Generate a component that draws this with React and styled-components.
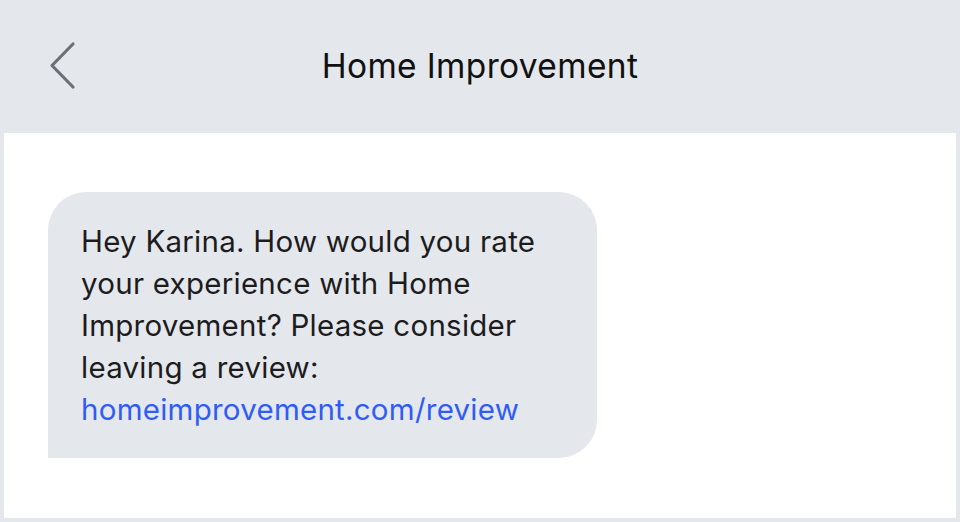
import React from "react";
import styled, { createGlobalStyle } from "styled-components";

const GlobalStyle = createGlobalStyle`
  html, body {
    margin: 0;
    padding: 0;
    background: #e4e7eb;
    font-family: Inter, "Noto Sans", sans-serif;
  }
`;

const Screen = styled.div`
  width: 960px;
  height: 522px;
  background: #e4e7eb;
  display: flex;
  flex-direction: column;
  box-sizing: border-box;
  padding: 0 4px 4px;
`;

const Header = styled.header`
  height: 133px;
  display: grid;
  grid-template-columns: 80px 1fr 80px;
  align-items: center;
  flex-shrink: 0;
`;

const BackButton = styled.button`
  border: none;
  background: none;
  padding: 0;
  margin-left: 43px;
  width: 30px;
  height: 52px;
  cursor: pointer;
  display: flex;
  align-items: center;
  margin-top: -2px;
`;

const Title = styled.h1`
  margin: 0;
  text-align: center;
  font-size: 33.5px;
  font-weight: 400;
  letter-spacing: 0.35px;
  color: #111;
  margin-top: -2px;
`;

const Thread = styled.main`
  flex: 1;
  background: #fff;
  padding: 59px 44px;
`;

const Bubble = styled.div`
  width: 549px;
  box-sizing: border-box;
  background: #e4e7eb;
  border-radius: 38px 38px 38px 0;
  padding: 28px 33px;
  font-size: 29.5px;
  line-height: 42px;
  letter-spacing: 0.25px;
  color: #1c1c1e;
`;

const Link = styled.a`
  color: #2f5cf6;
  text-decoration: none;
`;

export default function App() {
  return (
    <>
      <GlobalStyle />
      <Screen>
        <Header>
          <BackButton aria-label="Back">
            <svg width="30" height="52" viewBox="0 0 30 52" fill="none">
              <path d="M26 4 L5 25.5 L26 47" stroke="#6b7079" strokeWidth="3.2" strokeLinecap="round" strokeLinejoin="round" />
            </svg>
          </BackButton>
          <Title>Home Improvement</Title>
          <div />
        </Header>
        <Thread>
          <Bubble>
            Hey Karina. How would you rate your experience with Home Improvement? Please consider leaving a review:{" "}
            <Link href="#">homeimprovement.com/review</Link>
          </Bubble>
        </Thread>
      </Screen>
    </>
  );
}
